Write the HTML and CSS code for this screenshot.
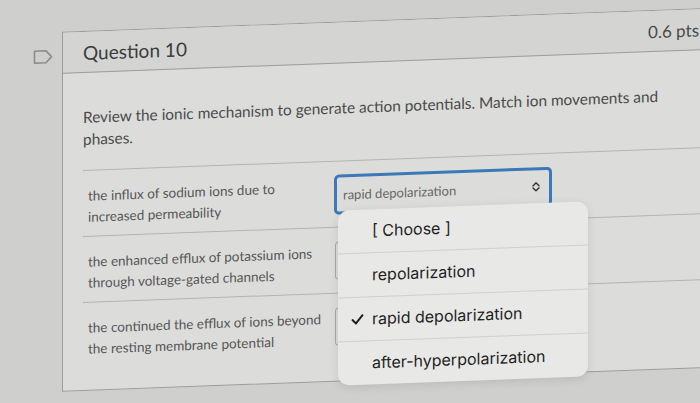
FILE: index.html
```html
<!DOCTYPE html>
<html>
<head>
<meta charset="utf-8">
<title>Question 10</title>
<link rel="stylesheet" href="styles.css">
</head>
<body>
<div class="page">
  <div class="flag">
    <svg width="20" height="15" viewBox="0 0 20 15"><path d="M1.5 1.5H13L18.5 7.5L13 13.5H1.5Z" fill="none" stroke="#8b8c8a" stroke-width="1.6" stroke-linejoin="round"/></svg>
  </div>
  <div class="question">
    <div class="q-header">
      <span class="q-name">Question 10</span>
      <span class="q-pts">0.6 pts</span>
    </div>
    <div class="q-body">
      <p class="q-text">Review the ionic mechanism to generate action potentials. Match ion movements and phases.</p>
      <div class="answers">
        <div class="answer">
          <div class="answer-label">the influx of sodium ions due to increased permeability</div>
          <div class="select-wrap">
            <div class="select focused">
              <span>rapid depolarization</span>
              <svg width="8" height="11" viewBox="0 0 8 11"><path d="M1 4.5L4 1.5L7 4.5M1 6.5L4 9.5L7 6.5" fill="none" stroke="#333" stroke-width="1.4" stroke-linecap="round" stroke-linejoin="round"/></svg>
            </div>
            <ul class="picker">
              <li>[ Choose ]</li>
              <li>repolarization</li>
              <li class="checked"><svg class="check" width="13" height="11" viewBox="0 0 13 11"><path d="M1.5 6L5 9.5L11.5 1.5" fill="none" stroke="#1f1f1f" stroke-width="2" stroke-linecap="round" stroke-linejoin="round"/></svg>rapid depolarization</li>
              <li>after-hyperpolarization</li>
            </ul>
          </div>
        </div>
        <div class="answer">
          <div class="answer-label">the enhanced efflux of potassium ions through voltage-gated channels</div>
          <div class="select-wrap">
            <div class="select"><span>[ Choose ]</span></div>
          </div>
        </div>
        <div class="answer">
          <div class="answer-label">the continued the efflux of ions beyond the resting membrane potential</div>
          <div class="select-wrap">
            <div class="select"><span>[ Choose ]</span></div>
          </div>
        </div>
      </div>
    </div>
  </div>
</div>
</body>
</html>
```

FILE: styles.css
```css
html, body { margin: 0; height: 100%; overflow: hidden; }
body { background: #cfd0ce; font-family: Lato, "Liberation Sans", sans-serif; }

/* the photo is taken at a slight angle */
.page { display: flex; padding-top: 34px; transform: skewY(-2.1deg); transform-origin: 0 0; }

.flag { flex: none; width: 62px; box-sizing: border-box; padding: 17px 0 0 33px; }
.flag svg { display: block; }

.question { flex: none; width: 663px; border: 1px solid #9c9d9b; background: #dcdddb; }
.q-header { height: 40px; display: flex; align-items: center; justify-content: space-between; padding: 0 27px 0 20px; background: #d4d5d3; border-bottom: 1px solid #9c9d9b; }
.q-name { font-size: 19px; color: #3b3b3b; }
.q-pts { font-size: 17px; color: #4a4a4a; }

.q-body { padding: 33px 20px 22px 20px; }
.q-text { margin: 0 0 20px; max-width: 590px; font-size: 15.4px; line-height: 22px; color: #4a4a4a; }

.answer { display: flex; align-items: center; height: 66px; box-sizing: border-box; border-top: 1px solid #b3b4b2; }
.answer-label { flex: none; width: 245px; box-sizing: border-box; padding-left: 5px; margin-top: 6px; font-size: 13.5px; line-height: 21px; color: #555; }

.select-wrap { position: relative; margin-left: 7px; }
.select { width: 216px; height: 38px; box-sizing: border-box; display: flex; align-items: center; justify-content: space-between; padding: 0 9px 0 7px; border: 1px solid #a8a9a7; border-radius: 4px; font-size: 13px; color: #666; background: #dcdddb; }
.select svg { display: block; }
.select.focused { border: 2px solid #3d78b8; box-shadow: 0 0 0 1px #3d78b8; padding-left: 6px; }

.picker { position: absolute; z-index: 2; top: 35px; left: 3px; width: 250px; margin: 0; padding: 0; list-style: none; background: #e8e9e7; border-radius: 11px; box-shadow: 0 2px 10px rgba(0,0,0,.1); overflow: hidden; }
.picker li { position: relative; height: 43px; display: flex; align-items: center; padding-left: 34px; font-family: Inter, "Noto Sans", sans-serif; font-size: 16px; color: #1f1f1f; }
.picker li + li { border-top: 1px solid #cfd0ce; }
.picker .check { position: absolute; left: 13px; top: 16px; }
```
